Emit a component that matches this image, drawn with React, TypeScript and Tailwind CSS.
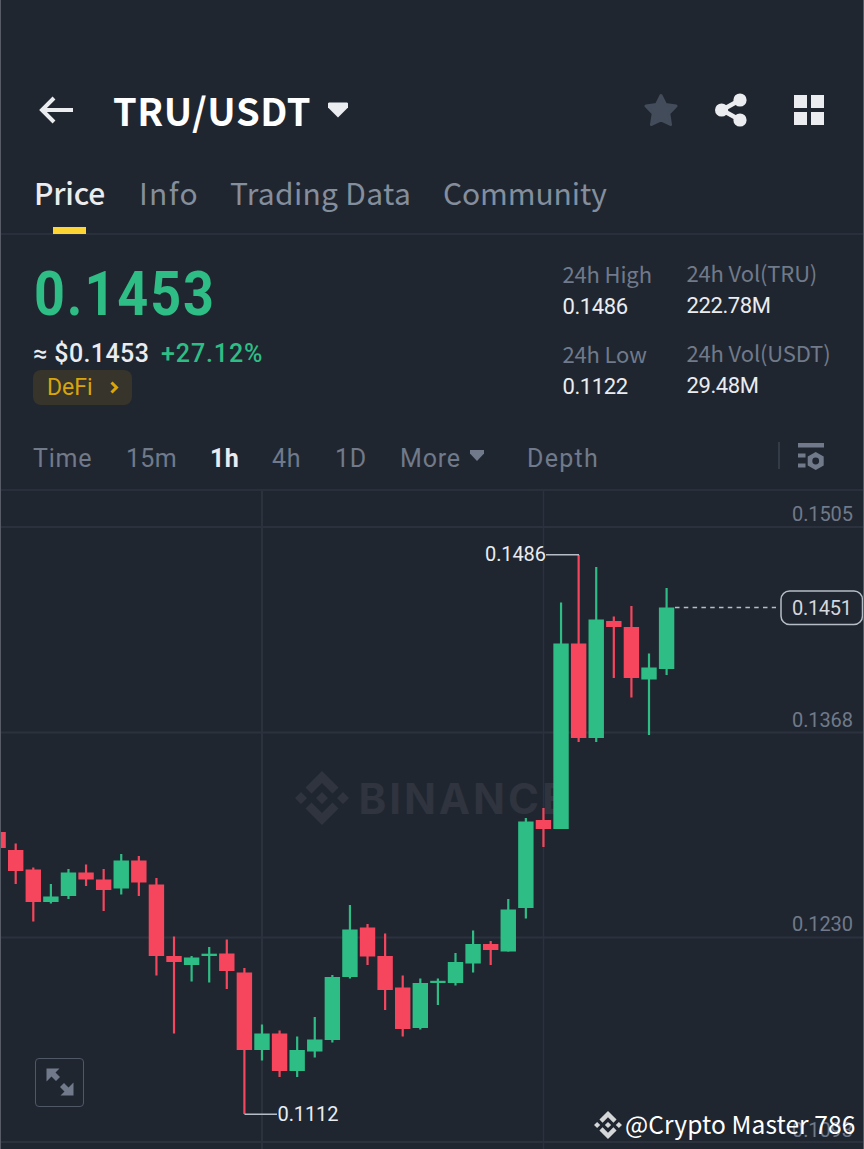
import React from 'react';
import { clsx } from 'clsx';

interface Candle {
  high: number;
  top: number;
  bottom: number;
  low: number;
  up: boolean;
}

const UP = '#2ebd85';
const DOWN = '#f6465d';

// [high, body top, body bottom, low, up]
const rows: [number, number, number, number, number][] = [
  [832, 832, 848, 848, 0],
  [843.5, 850, 871, 884, 0],
  [867.5, 869.5, 902, 921.5, 0],
  [884, 896.5, 902, 903.5, 1],
  [869, 872.5, 896, 899, 1],
  [864.5, 872.5, 879.5, 886, 0],
  [869, 879.5, 890, 911, 0],
  [854, 860.5, 888.5, 894.5, 1],
  [856, 860.5, 882.5, 896, 0],
  [878, 884.5, 956, 975.5, 0],
  [936.5, 956, 962, 1033.5, 0],
  [956, 957.5, 965, 981.5, 1],
  [947, 953.7, 956, 982.5, 1],
  [939.5, 953.5, 971, 989, 0],
  [968, 972.5, 1050, 1114, 0],
  [1024.5, 1033.5, 1050, 1060.5, 1],
  [1030.5, 1033.5, 1071, 1077, 0],
  [1036.5, 1050, 1071, 1077, 1],
  [1017, 1039.5, 1051.5, 1057.5, 1],
  [975, 977, 1040, 1042.5, 1],
  [905, 929.5, 977, 978.5, 1],
  [924, 927.5, 956.5, 965, 0],
  [933.5, 956, 990, 1010, 0],
  [975.5, 987.5, 1029, 1036.5, 0],
  [978.5, 983, 1028, 1029.5, 1],
  [978.5, 980.8, 983, 1005, 1],
  [953, 962, 983, 985.5, 1],
  [930.5, 944, 963.5, 972.5, 1],
  [941, 944, 950, 965, 0],
  [899, 909.5, 951.5, 951.5, 1],
  [818, 821.5, 908, 918.5, 1],
  [808, 820, 829, 847, 0],
  [602.5, 643.5, 829, 829, 1],
  [555, 643.5, 738, 742, 0],
  [567, 619.5, 738, 742, 1],
  [616.5, 621, 627, 678, 0],
  [606, 627, 678, 697.5, 0],
  [653.5, 667.5, 679.5, 735, 1],
  [588, 607.5, 669, 675, 1],
];

const candles: Candle[] = rows.map(([high, top, bottom, low, up]) => ({
  high, top, bottom, low, up: up === 1,
}));

const tabs = [
  { name: 'Price', className: 'w-[105px] tracking-[-0.2px]' },
  { name: 'Info', className: 'w-[91px] tracking-[1.3px]' },
  { name: 'Trading Data', className: 'w-[213px] tracking-[0.3px]' },
  { name: 'Community', className: 'tracking-[-0.1px]' },
];

const intervals = [
  { name: 'Time', className: 'w-[93px]' },
  { name: '15m', className: 'w-[84px] tracking-[0.3px]' },
  { name: '1h', className: 'w-[62px] tracking-[0.3px]' },
  { name: '4h', className: 'w-[63px]' },
  { name: '1D', className: 'w-[65px]' },
  { name: 'More', className: 'w-[127px]' },
  { name: 'Depth', className: 'tracking-[1.3px]' },
];

function BinanceMark({ className }: { className?: string }) {
  return (
    <svg viewBox="0 0 54 54" className={className} fill="currentColor">
      <path d="M27 0 43.5 16.5 37.5 22.5 27 12 16.5 22.5 10.5 16.5Z" />
      <path d="M27 54 43.5 37.5 37.5 31.5 27 42 16.5 31.5 10.5 37.5Z" />
      <path d="M6 21 12 27 6 33 0 27ZM48 21 54 27 48 33 42 27ZM27 21 33 27 27 33 21 27Z" />
    </svg>
  );
}

function Header() {
  return (
    <header className="mt-20 flex h-[60px] items-center pl-[39px] pr-[40px]">
      <svg viewBox="0 0 34 28" className="h-7 w-[34px]" fill="none" stroke="#eaecef" strokeWidth="4">
        <path d="M34 14H4M15 2 3 14 15 26" />
      </svg>
      <h1 className="ml-[40px] w-[214px] whitespace-nowrap font-['Noto_Sans_CJK_SC',sans-serif] text-[38px] font-bold leading-[60px] tracking-[0.6px] text-white">
        TRU/USDT
      </h1>
      <svg viewBox="0 0 21 16" className="ml-px h-4 w-5" fill="#eaecef">
        <path d="M1 0H20V0L21 1V5.5L10.5 16 0 5.5V1Z" />
      </svg>
      <svg viewBox="0 0 34 34" className="ml-auto h-[34px] w-[34px]" fill="#434c5a" stroke="#434c5a" strokeWidth="3" strokeLinejoin="round">
        <path d="M17 2.5 21.5 11.5 32 13 24.8 20.5 26.5 31.5 17 26.8 7.5 31.5 9.2 20.5 2 13 12.5 11.5Z" />
      </svg>
      <svg viewBox="0 0 32 34" className="ml-[37px] h-[34px] w-8" fill="#eaecef">
        <path d="M25 7 7 17 25 27" fill="none" stroke="#eaecef" strokeWidth="4.5" />
        <circle cx="25" cy="7" r="6.6" />
        <circle cx="6.6" cy="17" r="6.6" />
        <circle cx="25" cy="27" r="6.6" />
      </svg>
      <div className="ml-[47px] grid grid-cols-2 gap-1">
        {[0, 1, 2, 3].map(i => (
          <span key={i} className="h-[13px] w-[13px] bg-[#eaecef]" />
        ))}
      </div>
    </header>
  );
}

function Tabs() {
  return (
    <nav className="flex h-[95px] border-b-2 border-[#29303b] pl-[34px] pt-[30px] font-['Noto_Sans_CJK_SC',sans-serif] text-[30px] leading-[44px]">
      {tabs.map((tab, i) => (
        <div
          key={tab.name}
          className={clsx('shrink-0 whitespace-nowrap', tab.className, i === 0 ? 'font-medium text-[#eaecef]' : 'text-[#848e9c]')}
        >
          {tab.name}
          {i === 0 && <div className="ml-[19px] mt-[13px] h-[7px] w-[33px] bg-[#fcd535]" />}
        </div>
      ))}
    </nav>
  );
}

function Stat({ label, value, className }: { label: string; value: string; className?: string }) {
  return (
    <div className={clsx('whitespace-nowrap', className)}>
      <div className="font-['Noto_Sans_CJK_SC',sans-serif] text-[22px] leading-[30px] tracking-[-0.15px] text-[#707a8a]">{label}</div>
      <div className="mt-1 font-[Roboto,sans-serif] text-[22px] leading-[30px] tracking-[-0.4px] text-[#eaecef]">{value}</div>
    </div>
  );
}

function Summary() {
  return (
    <section className="flex h-[190px] font-[Roboto,sans-serif]">
      <div className="w-[562.5px] pl-[33px]">
        <div className="ml-px mt-[25px] w-fit origin-left scale-x-[0.87] text-[62px] font-bold leading-[68px] tracking-[2.2px] text-[#2ebd85]">0.1453</div>
        <div className="mt-[10px] flex text-[25px] font-medium leading-[32px] tracking-[0.4px]">
          <span className="w-[128px] whitespace-nowrap text-[#eaecef]">≈ $0.1453</span>
          <span className="tracking-[0.9px] text-[#2ebd85]">+27.12%</span>
        </div>
        <div className="flex h-[35px] w-[99px] items-center rounded-lg bg-[#37342b] pl-[14px] pr-[13px] text-[23px] leading-[35px] text-[#d9a50d]">
          DeFi
          <svg viewBox="0 0 9 13" className="ml-auto h-[13px] w-[9px]" fill="none" stroke="currentColor" strokeWidth="3">
            <path d="M1.5 1.5 6.5 6.5 1.5 11.5" />
          </svg>
        </div>
      </div>
      <div className="w-[124px] pt-[23px]">
        <Stat label="24h High" value="0.1486" />
        <Stat label="24h Low" value="0.1122" className="mt-4" />
      </div>
      <div className="pt-[22px]">
        <Stat label="24h Vol(TRU)" value="222.78M" />
        <Stat label="24h Vol(USDT)" value="29.48M" className="mt-4" />
      </div>
    </section>
  );
}

function Intervals() {
  return (
    <nav className="flex h-[66px] items-center border-b-2 border-[#29303b] pl-[33px] pr-[40px] font-[Roboto,sans-serif] text-[25px] leading-8 tracking-[0.8px] text-[#707a8a]">
      {intervals.map(item => (
        <div
          key={item.name}
          className={clsx('mt-[3px] flex shrink-0 items-center', item.className, item.name === '1h' && 'font-bold text-[#eaecef]')}
        >
          {item.name}
          {item.name === 'More' && (
            <svg viewBox="0 0 14 11" className="mb-[7px] ml-[9px] h-[11px] w-[14px]" fill="currentColor">
              <path d="M0 0H14V3.5L7 11 0 3.5Z" />
            </svg>
          )}
        </div>
      ))}
      <div className="mb-[3px] ml-auto h-[27px] w-0.5 bg-[#333b47]" />
      <svg viewBox="0 0 26 27" className="mb-[2px] ml-[18px] h-[27px] w-[26px]" fill="#707a8a">
        <path d="M0 0H26V4.5H0ZM0 10.5H7.5V14.5H0ZM0 20.5H7.5V24.5H0Z" />
        <path fillRule="evenodd" d="M17.7 9 25.7 13.5V22.5L17.7 27 9.7 22.5V13.5ZM17.7 14.6A3.4 3.4 0 1 0 17.7 21.4 3.4 3.4 0 1 0 17.7 14.6Z" />
      </svg>
    </nav>
  );
}

function PriceChart() {
  return (
    <svg viewBox="0 491 864 658" className="block h-[658px] w-[864px] font-[Roboto,sans-serif]">
      <g stroke="#2b323e" strokeWidth="2">
        {[527, 732.5, 937.5, 1142].map(y => <path key={y} d={`M0 ${y}H864`} />)}
        <path d="M262 491V1149" />
        <path d="M543.5 491V1149" strokeWidth="1.5" />
      </g>
      <text x="358.5" y="814" fill="#2f343e" textLength="209" className="font-[Inter,sans-serif] text-[42px] font-bold">BINANCE</text>

      {candles.map((c, i) => {
        const x = -1.9 + i * 17.592;
        const color = c.up ? UP : DOWN;
        return (
          <g key={i} fill={color}>
            <rect x={x - 1.1} y={c.high} width="2.2" height={c.low - c.high} />
            <rect x={x - 7.7} y={c.top} width="15.4" height={c.bottom - c.top} />
          </g>
        );
      })}

      {/* high and low markers */}
      <g stroke="#b7bdc6" strokeWidth="1.5">
        <path d="M546 554.7H579M244.5 1114.3H277" />
        <path d="M675 607.5H776" strokeDasharray="4.5 4.3" />
      </g>
      <g fill="#eaecef" className="text-[20px]">
        <text x="485" y="561" textLength="61">0.1486</text>
        <text x="277.5" y="1120.5" textLength="61">0.1112</text>
      </g>

      <rect x="781" y="591" width="81.5" height="33.5" rx="8.5" fill="none" stroke="#b7bdc6" strokeWidth="1.5" />
      <text x="792" y="615" textLength="60" fill="#d5d8dd" className="text-[20px]">0.1451</text>
      <g fill="#707a8a" className="text-[20px]">
        <text x="792" y="521" textLength="61">0.1505</text>
        <text x="792" y="726.5" textLength="61">0.1368</text>
        <text x="792" y="931" textLength="61">0.1230</text>
        <text x="792" y="1137" textLength="61">0.1093</text>
      </g>
    </svg>
  );
}

export default function App() {
  return (
    <main className="relative h-[1149px] w-[864px] overflow-hidden bg-[#202630]">
      <Header />
      <Tabs />
      <Summary />
      <Intervals />
      <PriceChart />

      <BinanceMark className="absolute left-[295px] top-[771px] h-[54px] w-[54px] text-[#2f343e]" />

      <button className="absolute left-[35px] top-[1058px] flex h-[49px] w-[49px] items-center justify-center rounded-[4px] border-[1.5px] border-[#4f5867]">
        <svg viewBox="0 0 28 28" className="mb-0.5 h-7 w-7" fill="#707a8a">
          <path d="M0.5 0.5H13.5L9.5 4.5 14 9 10 13 5.5 8.5 0.5 13.5Z" />
          <path d="M27.5 27.5H14.5L18.5 23.5 14 19 18 15 22.5 19.5 27.5 14.5Z" />
        </svg>
      </button>

      <div className="absolute left-[594px] top-[1107px] flex h-9 items-center text-white">
        <BinanceMark className="h-7 w-7 text-[#d5d6d8]" />
        <span className="mb-0.5 ml-[3px] whitespace-nowrap font-['Noto_Sans_CJK_SC',sans-serif] text-[24.5px] leading-9 tracking-[0.1px]">@Crypto Master 786</span>
      </div>

      {/* screen edges */}
      <div className="pointer-events-none absolute inset-0 border-x border-[#565b66]" />
    </main>
  );
}
